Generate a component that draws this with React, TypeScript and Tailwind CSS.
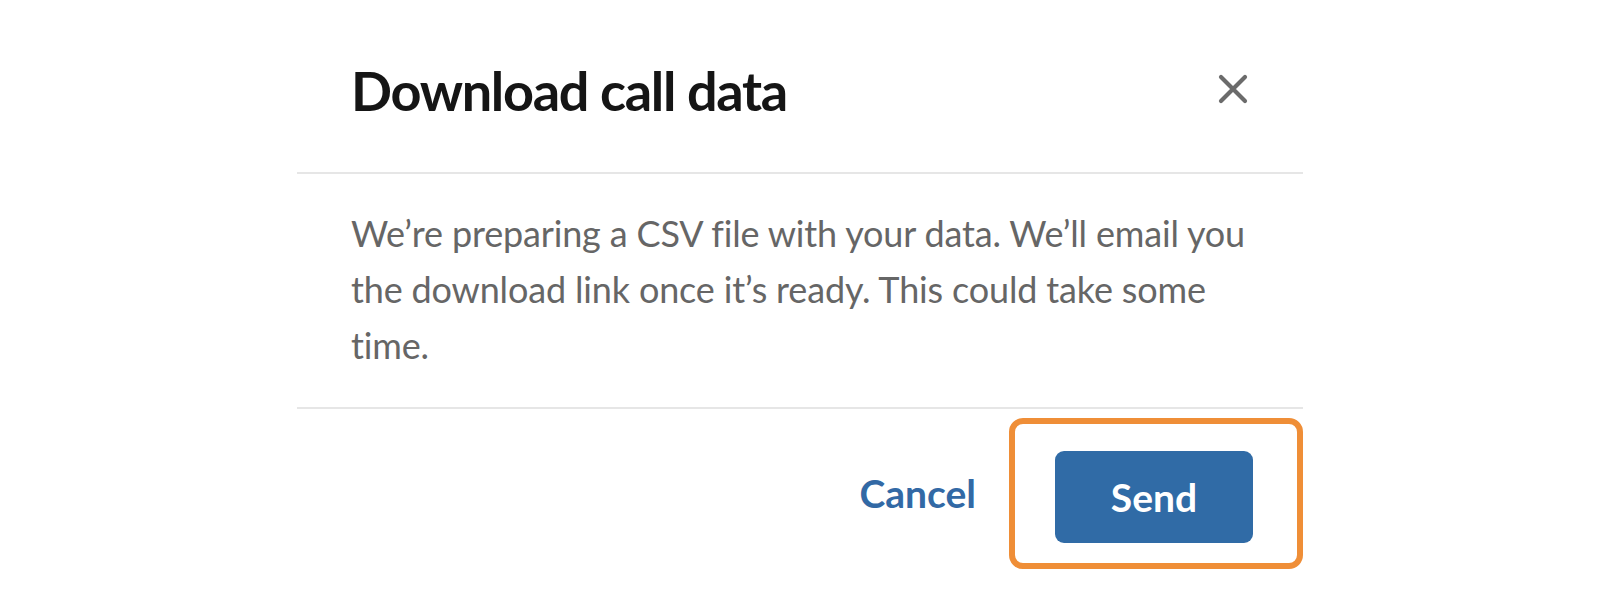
import React from "react";

const CloseIcon = () => (
  <svg width="30" height="30" viewBox="0 0 30 30" fill="none">
    <path
      d="M3 3L27 27M27 3L3 27"
      stroke="#6b6b6b"
      strokeWidth="4.2"
      strokeLinecap="round"
    />
  </svg>
);

const App = () => {
  return (
    <div
      className="flex min-h-[602px] justify-center bg-white"
      style={{ fontFamily: "Lato, 'Open Sans', sans-serif" }}
    >
      <div className="w-[1006px]">
        {/* header */}
        <div className="flex items-start justify-between pl-[54px] pr-[55px] pt-[59px] pb-[48px]">
          <h2 className="text-[54px] font-bold leading-[1.2] tracking-[-1.3px] text-[#151515]">
            Download call data
          </h2>
          <button type="button" className="mt-[15px] block">
            <CloseIcon />
          </button>
        </div>

        <div className="h-[2px] bg-[#e6e6e6]" />

        {/* body */}
        <div className="pl-[54px] pr-[40px] pt-[31px] pb-[34px]">
          <p className="text-[36px] leading-[56px] tracking-[-0.16px] text-[#666666]">
            We’re preparing a CSV file with your data. We’ll email you the
            download link once it’s ready. This could take some time.
          </p>
        </div>

        <div className="h-[2px] bg-[#e6e6e6]" />

        {/* footer */}
        <div className="flex items-center justify-end pt-[9px]">
          <button
            type="button"
            className="mr-[33px] text-[39px] font-bold text-[#3269a5]"
          >
            Cancel
          </button>
          <div className="rounded-[14px] border-[6px] border-[#ef8e37] pl-[40px] pr-[44px] pt-[27px] pb-[20px]">
            <button
              type="button"
              className="flex h-[92px] w-[198px] items-center justify-center rounded-[9px] bg-[#306ba6] text-[39px] font-bold text-white"
            >
              Send
            </button>
          </div>
        </div>
      </div>
    </div>
  );
};

export default App;
